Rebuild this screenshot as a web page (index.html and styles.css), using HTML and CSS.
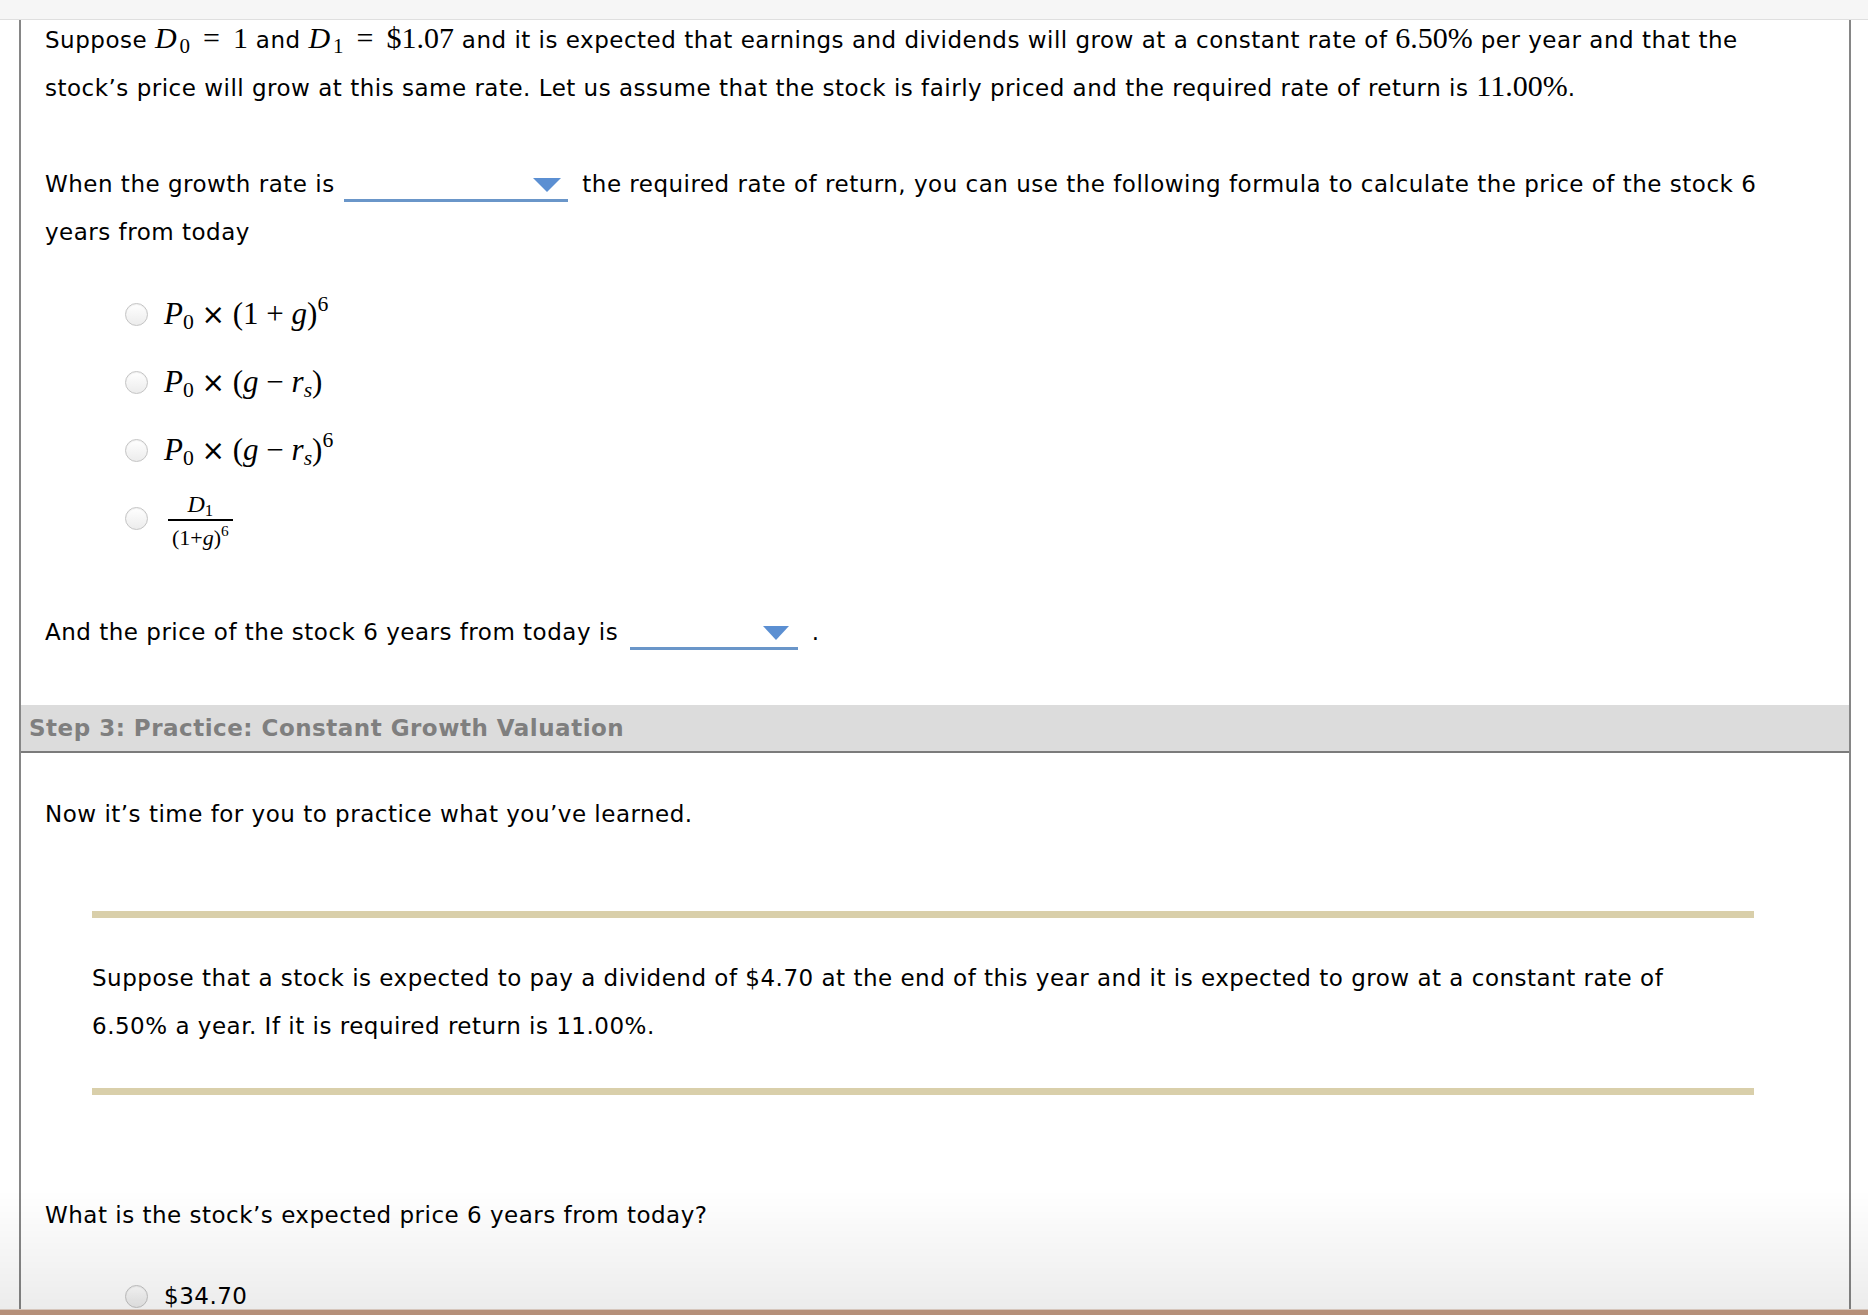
FILE: index.html
```html
<!DOCTYPE html>
<html lang="en">
<head>
    <meta charset="UTF-8">
    <title>Step 3: Practice: Constant Growth Valuation</title>
    <link rel="stylesheet" href="styles.css">
</head>
<body>

    <div class="topbar"></div>

    <div class="panel">
        <div class="section">
            <p class="text">Suppose <span class="m"><i>D</i><sub>0</sub><span class="rel">=</span>1</span> and <span class="m"><i>D</i><sub>1</sub><span class="rel">=</span>$1.07</span> and it is expected that earnings and dividends will grow at a constant rate of <span class="m">6.50%</span> per year and that the stock’s price will grow at this same rate. Let us assume that the stock is fairly priced and the required rate of return is <span class="m">11.00%</span>.</p>

            <p class="text gap">When the growth rate is <span class="dropdown"><svg width="28" height="14" viewBox="0 0 28 14"><path d="M0 0H28L14 14Z" fill="#5b8fd2"/></svg></span> the required rate of return, you can use the following formula to calculate the price of the stock 6 years from today</p>

            <ul class="options">
                <li class="option">
                    <span class="radio"></span>
                    <span class="formula"><i>P</i><sub>0</sub> <span class="times">×</span> (1 + <i>g</i>)<sup>6</sup></span>
                </li>
                <li class="option">
                    <span class="radio"></span>
                    <span class="formula"><i>P</i><sub>0</sub> <span class="times">×</span> (<i>g</i> − <i>r</i><sub><i>s</i></sub>)</span>
                </li>
                <li class="option">
                    <span class="radio"></span>
                    <span class="formula"><i>P</i><sub>0</sub> <span class="times">×</span> (<i>g</i> − <i>r</i><sub><i>s</i></sub>)<sup>6</sup></span>
                </li>
                <li class="option">
                    <span class="radio"></span>
                    <span class="fraction">
                        <span class="num"><i>D</i><sub>1</sub></span>
                        <span class="den">(1+<i>g</i>)<sup>6</sup></span>
                    </span>
                </li>
            </ul>

            <p class="text answer">And the price of the stock 6 years from today is <span class="dropdown short"><svg width="26" height="14" viewBox="0 0 26 14"><path d="M0 0H26L13 14Z" fill="#5b8fd2"/></svg></span> .</p>
        </div>

        <div class="step-head">Step 3: Practice: Constant Growth Valuation</div>

        <div class="section practice">
            <p class="text">Now it’s time for you to practice what you’ve learned.</p>

            <div class="scenario">
                <p class="text">Suppose that a stock is expected to pay a dividend of $4.70 at the end of this year and it is expected to grow at a constant rate of 6.50% a year. If it is required return is 11.00%.</p>
            </div>

            <p class="text question">What is the stock’s expected price 6 years from today?</p>

            <ul class="options last">
                <li class="option">
                    <span class="radio"></span>
                    <span class="choice">$34.70</span>
                </li>
            </ul>
        </div>
    </div>

    <div class="bottom-fade"></div>
    <div class="bottom-bar"></div>

</body>
</html>
```

FILE: styles.css
```css
* {
    box-sizing: border-box;
    margin: 0;
    padding: 0;
}

body {
    font-family: "DejaVu Sans", Verdana, sans-serif;
    font-size: 23px;
    letter-spacing: 0.5px;
    color: #000;
    background-color: #fff;
}

/* window chrome */
.topbar {
    position: fixed;
    top: 0;
    left: 0;
    right: 0;
    height: 20px;
    background-color: #f6f6f6;
    border-bottom: 1px solid #dfdfdf;
    z-index: 5;
}

.bottom-fade {
    position: fixed;
    left: 0;
    right: 0;
    bottom: 0;
    height: 125px;
    background: linear-gradient(rgba(0, 0, 0, 0), rgba(0, 0, 0, 0.08));
    pointer-events: none;
    z-index: 4;
}

.bottom-bar {
    position: fixed;
    left: 0;
    right: 0;
    bottom: 0;
    height: 6px;
    background-color: #b58f79;
    border-top: 1px solid #d6c6bc;
    z-index: 5;
}

/* content */
.panel {
    margin-left: 19px;
    width: 1832px;
    border-left: 2px solid #868686;
    border-right: 2px solid #868686;
}

.section {
    padding: 16px 60px 49px 24px;
}

.text {
    line-height: 48px;
}

.gap {
    margin-top: 48px;
}

.answer {
    margin-top: 56px;
}

.m {
    font-family: "Liberation Serif", "Times New Roman", serif;
    font-size: 30px;
    line-height: 1;
    letter-spacing: 0;
}

.m sub {
    margin-left: 3px;
}

.rel {
    margin: 0 13px;
}

sub {
    font-size: 0.7em;
    vertical-align: -0.25em;
    line-height: 0;
}

sup {
    font-size: 0.7em;
    vertical-align: 0.6em;
    line-height: 0;
}

.dropdown {
    display: inline-block;
    width: 224px;
    margin: 0 6px 0 2px;
    font-size: 0;
    line-height: 0;
    text-align: right;
    padding: 0 7px 7px 0;
    border-bottom: 3px solid #6a96c9;
}

.dropdown.short {
    width: 168px;
    padding-right: 9px;
    margin-left: 4px;
}

.options {
    list-style: none;
    margin-top: 24px;
}

.option {
    display: flex;
    align-items: center;
    height: 68px;
    padding-left: 80px;
}

.radio {
    width: 23px;
    height: 23px;
    border-radius: 50%;
    border: 1px solid #c4c4c4;
    background: linear-gradient(#ffffff, #ececec);
    box-shadow: inset 0 1px 1px rgba(0, 0, 0, 0.06);
    margin-right: 16px;
    flex-shrink: 0;
}

.formula {
    font-family: "Liberation Serif", "Times New Roman", serif;
    font-size: 31px;
    letter-spacing: 0;
    white-space: nowrap;
}

.times {
    font-family: "DejaVu Sans", sans-serif;
    font-size: 28px;
}

.fraction {
    display: inline-flex;
    flex-direction: column;
    align-items: center;
    margin-left: 4px;
    margin-top: 8px;
    font-family: "Liberation Serif", "Times New Roman", serif;
    font-size: 22px;
    letter-spacing: 0;
}

.num {
    font-size: 24px;
    line-height: 24px;
    padding: 0 8px 3px;
}

.den {
    line-height: 30px;
    border-top: 2px solid #000;
    padding: 2px 4px 0;
}

.step-head {
    height: 48px;
    line-height: 46px;
    background-color: #dcdcdc;
    border-bottom: 2px solid #7b7b7b;
    padding-left: 8px;
    font-weight: bold;
    color: #7f7f7f;
}

.practice {
    padding-top: 37px;
}

.scenario {
    margin: 73px 35px 0 47px;
    border-top: 7px solid #d9cfaa;
    border-bottom: 7px solid #d9cfaa;
    padding: 36px 40px 38px 0;
}

.question {
    margin-top: 96px;
}

.options.last {
    margin-top: 23px;
}

.choice {
    line-height: 48px;
}
```
